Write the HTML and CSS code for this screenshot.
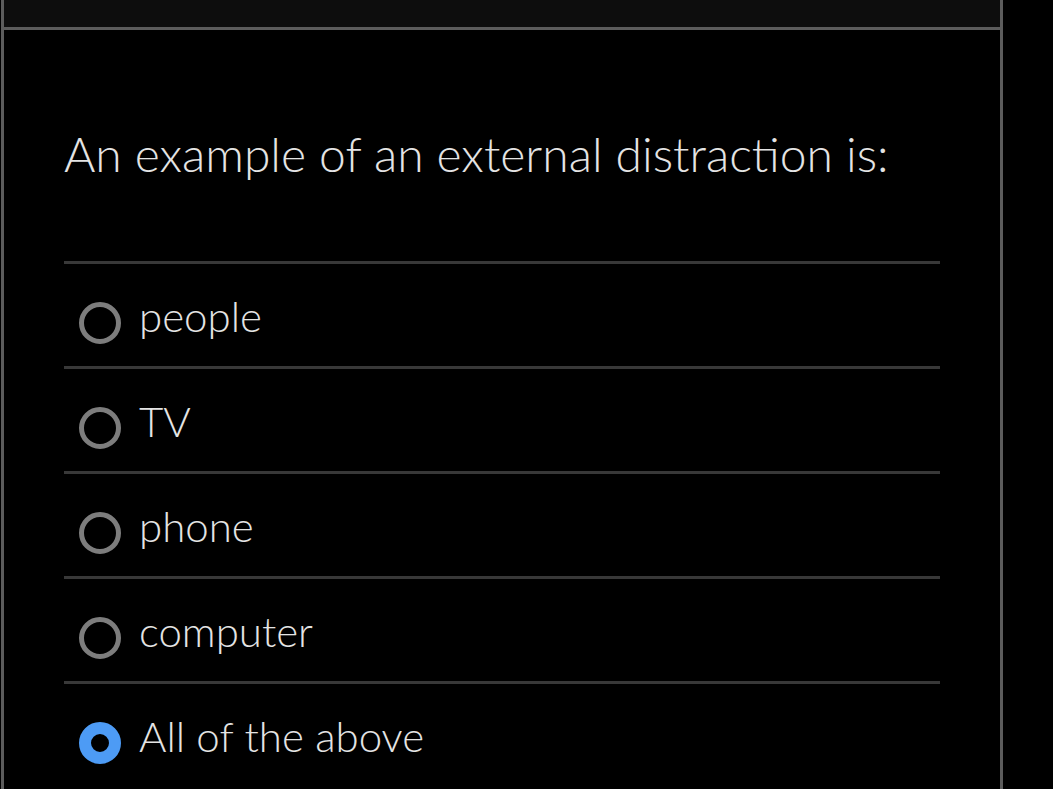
FILE: index.html
```html
<!DOCTYPE html>
<html lang="en">
<head>
  <meta charset="UTF-8">
  <meta name="viewport" content="width=device-width, initial-scale=1.0">
  <title>Quiz Question</title>
  <link rel="stylesheet" href="styles.css">
</head>
<body>
  <div class="card">
    <div class="card-top"></div>
    <div class="card-body">
      <h2 class="question">An example of an external distraction is:</h2>
      <form class="choices" onsubmit="return false">
        <label class="choice">
          <input type="radio" name="answer" value="people">
          <span class="dot"></span>
          <span class="choice-text">people</span>
        </label>
        <label class="choice">
          <input type="radio" name="answer" value="tv">
          <span class="dot"></span>
          <span class="choice-text">TV</span>
        </label>
        <label class="choice">
          <input type="radio" name="answer" value="phone">
          <span class="dot"></span>
          <span class="choice-text">phone</span>
        </label>
        <label class="choice">
          <input type="radio" name="answer" value="computer">
          <span class="dot"></span>
          <span class="choice-text">computer</span>
        </label>
        <label class="choice">
          <input type="radio" name="answer" value="all" checked>
          <span class="dot"></span>
          <span class="choice-text">All of the above</span>
        </label>
      </form>
    </div>
  </div>
</body>
</html>
```

FILE: styles.css
```css
body {
  margin: 0;
  padding: 0;
  background: #000;
  font-family: 'Lato', 'Open Sans', sans-serif;
  font-weight: 300;
  color: #e4e4e4;
  height: 789px;
  overflow: hidden;
}

.card {
  margin-left: 1px;
  width: 1002px;
  box-sizing: border-box;
  border-left: 3px solid #5c5c5c;
  border-right: 3px solid #5c5c5c;
  min-height: 789px;
}

.card-top {
  height: 27px;
  background: #0d0d0d;
  border-bottom: 3px solid #5c5c5c;
}

.card-body {
  padding: 0 60px;
}

.question {
  margin: 95px 0 78px 0;
  font-size: 48px;
  font-weight: 300;
  line-height: 1.2;
  letter-spacing: 0;
}

.choices {
  margin: 0;
}

.choice {
  display: flex;
  align-items: flex-start;
  height: 105px;
  border-top: 3px solid #383838;
  padding: 28px 0 0 15px;
  box-sizing: border-box;
  cursor: pointer;
}

.choice input {
  display: none;
}

.dot {
  width: 42px;
  height: 42px;
  margin-top: 10px;
  margin-right: 18px;
  border: 5px solid #7d7d7d;
  border-radius: 50%;
  box-sizing: border-box;
  flex-shrink: 0;
}

.choice input:checked + .dot {
  border: 12px solid #4d9bf5;
}

.choice-text {
  font-size: 42px;
  line-height: 48px;
}
```
